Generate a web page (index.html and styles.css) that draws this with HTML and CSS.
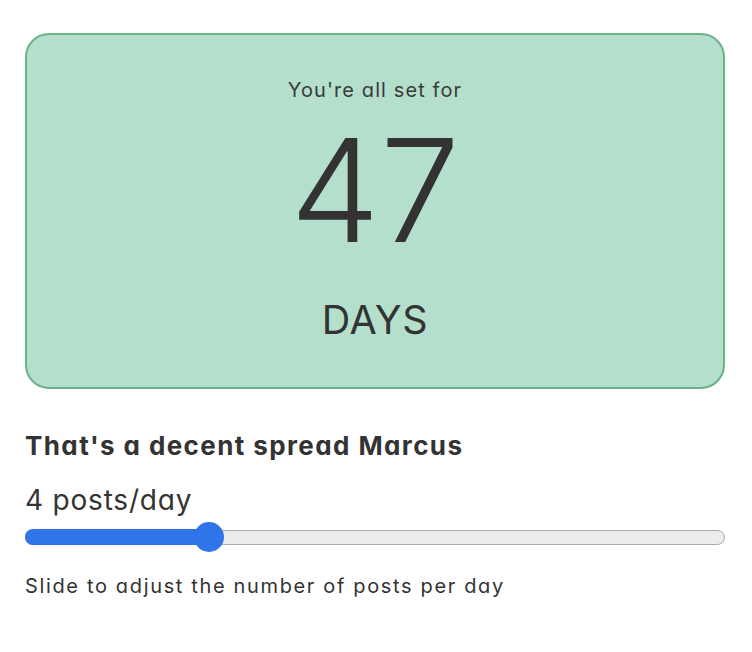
FILE: index.html
```html
<!DOCTYPE html>
<html lang="en">
<head>
<meta charset="utf-8">
<title>Posting schedule</title>
<link rel="stylesheet" href="styles.css">
</head>
<body>
<main class="page">
  <section class="card">
    <p class="card-lead">You're all set for</p>
    <p class="card-number">47</p>
    <p class="card-unit">DAYS</p>
  </section>
  <section class="control">
    <h2 class="control-title">That's a decent spread Marcus</h2>
    <p class="control-value">4 posts/day</p>
    <div class="range" role="slider" aria-valuemin="0" aria-valuemax="16" aria-valuenow="4">
      <div class="range-track">
        <div class="range-fill" style="width: 26.2%"></div>
        <div class="range-thumb" style="left: 26.2%"></div>
      </div>
    </div>
    <p class="control-hint">Slide to adjust the number of posts per day</p>
  </section>
</main>
</body>
</html>
```

FILE: styles.css
```css
* { box-sizing: border-box; }
html, body { margin: 0; background: #fff; }
body {
  font-family: Inter, "Open Sans", sans-serif;
  font-feature-settings: "cv11" 1;
  color: #333;
}
.page {
  padding: 33px 27px 0 25px;
  display: flex;
  flex-direction: column;
}
.card {
  width: 700px;
  height: 356px;
  background: #b4dfcc;
  border: 2px solid #6ab387;
  border-radius: 24px;
  display: flex;
  flex-direction: column;
  align-items: center;
}
.card p { margin: 0; }
.card-lead {
  margin-top: 41px !important;
  font-size: 20px;
  line-height: 28px;
  letter-spacing: 1.1px;
  color: #3a3a3a;
}
.card-number {
  margin-top: 14px !important;
  font-size: 143px;
  font-weight: 300;
  line-height: 143px;
  color: #333;
}
.card-unit {
  margin-top: 35px !important;
  font-size: 39.5px;
  line-height: 48px;
  letter-spacing: 0.7px;
  color: #333;
}
.control { padding-top: 39px; }
.control-title {
  margin: 0;
  font-size: 26px;
  font-weight: 700;
  line-height: 36px;
  letter-spacing: 1.4px;
  color: #333;
}
.control-value {
  margin: 18px 0 0;
  font-size: 28px;
  line-height: 36px;
  letter-spacing: 0.8px;
  color: #333;
}
.range {
  width: 700px;
  height: 30px;
  margin-top: 4px;
  display: flex;
  align-items: center;
}
.range-track {
  position: relative;
  flex: 1;
  height: 15px;
  border: 1.5px solid #aaa;
  border-radius: 8px;
  background: #ececec;
}
.range-fill {
  position: absolute;
  left: -1.5px;
  top: -1.5px;
  bottom: -1.5px;
  background: #2f74e8;
  border-radius: 8px 0 0 8px;
}
.range-thumb {
  position: absolute;
  top: 50%;
  width: 30px;
  height: 30px;
  margin: -15px 0 0 -15px;
  border-radius: 50%;
  background: #2f74e8;
}
.control-hint {
  margin: 20px 0 0;
  font-size: 20px;
  line-height: 28px;
  letter-spacing: 1.65px;
  color: #333;
}
```
